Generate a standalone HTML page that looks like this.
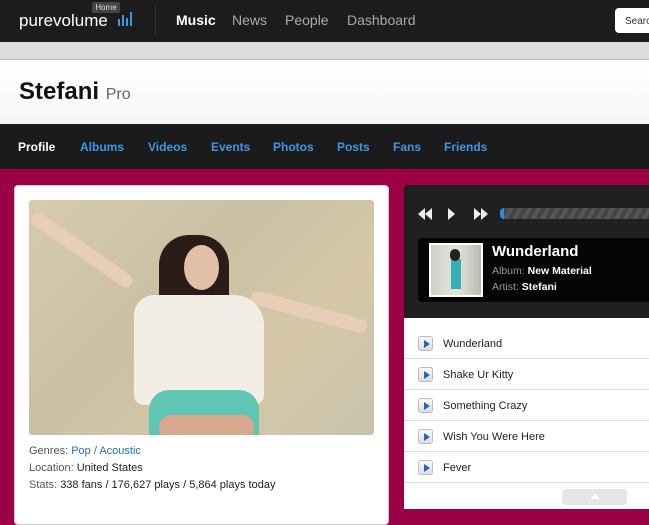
<!DOCTYPE html>
<html><head><style>
*{margin:0;padding:0;box-sizing:border-box}
body{width:649px;height:509px;overflow:hidden;background:#9c0046;font-family:"Liberation Sans","DejaVu Sans",sans-serif;position:relative}
.abs{position:absolute}
#top{left:0;top:0;width:649px;height:42px;background:#1c1c1c}
#top .m{position:absolute;top:12px;font-size:14px;color:#aaa}
#gray{left:0;top:42px;width:649px;height:18px;background:#dcdcdc;border-bottom:1px solid #bbb}
#hdr{left:0;top:60px;width:649px;height:64px;background:linear-gradient(#fff,#f6f6f6)}
#nav{left:0;top:124px;width:649px;height:45px;background:#1b1b1b}
#nav span{position:absolute;top:16px;font-size:12px;font-weight:bold;color:#3d97e8}
#card{left:14px;top:185px;width:375px;height:340px;background:#fff;border:1px solid #ccc;border-radius:4px}
#photo{left:29px;top:200px;width:345px;height:235px;overflow:hidden;background:
linear-gradient(135deg,#d9cbac,#c9c0a4 40%,#d6c8a6 70%,#c8c2ad);border-radius:3px}
#photo div{position:absolute}
.info{position:absolute;left:29px;font-size:11px;color:#555}
.info b{font-weight:normal;color:#222}.info a{color:#2a6ec0;text-decoration:none}
#player{left:404px;top:185px;width:245px;height:133px;background:#202020;border-radius:4px 0 0 0}
#now{left:418px;top:238px;width:231px;height:64px;background:#050505;border-radius:4px 0 0 4px}
#list{left:404px;top:318px;width:245px;height:191px;background:#fff}
.tr{position:absolute;left:404px;width:245px;height:31px;border-bottom:1px solid #ddd;font-size:11px;color:#222}
.tr i{position:absolute;left:14px;top:8px;width:15px;height:15px;border:1px solid #bbb;border-radius:3px;background:linear-gradient(#fafafa,#ddd)}
.tr i:after{content:"";position:absolute;left:5px;top:3px;border-left:6px solid #1a6bc0;border-top:4px solid transparent;border-bottom:4px solid transparent}
.tr span{position:absolute;left:39px;top:10px}
</style></head><body>
<div id="top" class="abs">
<div class="abs" style="left:19px;top:11px;font-size:17px;color:#fff">purevolume</div>
<div class="abs" style="left:92px;top:2px;width:28px;height:11px;background:#444;color:#ddd;font-size:8px;text-align:center;line-height:11px;border-radius:2px">Home</div>
<svg class="abs" style="left:117px;top:9px" width="20" height="18"><g fill="#3d97e8"><rect x="1" y="10" width="2" height="7"/><rect x="5" y="6" width="2" height="11"/><rect x="9" y="9" width="2" height="8"/><rect x="13" y="3" width="2" height="14"/></g></svg>
<div class="abs" style="left:155px;top:6px;width:1px;height:30px;background:#333"></div>
<span class="m" style="left:176px;color:#fff;font-weight:bold">Music</span>
<span class="m" style="left:232px">News</span>
<span class="m" style="left:285px">People</span>
<span class="m" style="left:347px">Dashboard</span>
<div class="abs" style="left:615px;top:8px;width:40px;height:25px;background:#fff;border-radius:4px;font-size:10px;color:#333;padding:8px 0 0 10px">Search</div>
</div>
<div id="gray" class="abs"></div>
<div id="hdr" class="abs"><div class="abs" style="left:19px;top:18px;font-size:24px;font-weight:bold;color:#111">Stefani <span style="font-size:16px;font-weight:normal;color:#666">Pro</span></div></div>
<div id="nav" class="abs">
<span style="left:18px;color:#fff">Profile</span><span style="left:80px">Albums</span><span style="left:148px">Videos</span><span style="left:211px">Events</span><span style="left:273px">Photos</span><span style="left:337px">Posts</span><span style="left:393px">Fans</span><span style="left:444px">Friends</span>
</div>
<div id="card" class="abs"></div>
<div id="photo" class="abs">
<div style="left:8px;top:10px;width:120px;height:14px;background:#e8cdb8;transform:rotate(35deg);transform-origin:0 0;border-radius:7px"></div>
<div style="left:220px;top:105px;width:120px;height:14px;background:#e8cdb8;transform:rotate(15deg);border-radius:7px"></div>
<div style="left:130px;top:35px;width:70px;height:160px;background:#2a1c18;border-radius:30px"></div>
<div style="left:105px;top:95px;width:130px;height:110px;background:#f2ede6;border-radius:20px 30px 10px 10px"></div>
<div style="left:155px;top:45px;width:35px;height:45px;background:#e2c0a8;border-radius:50%"></div>
<div style="left:120px;top:190px;width:110px;height:45px;background:#5ec6b2;border-radius:20px 20px 0 0"></div>
<div style="left:130px;top:215px;width:95px;height:25px;background:#d8a88e;border-radius:12px"></div>
</div>
<div class="info" style="top:445px">Genres: <a>Pop</a> / <a>Acoustic</a></div>
<div class="info" style="top:462px">Location: <b>United States</b></div>
<div class="info" style="top:479px">Stats: <b>338 fans / 176,627 plays / 5,864 plays today</b></div>
<div id="player" class="abs"></div>
<svg class="abs" style="left:417px;top:207px" width="75" height="14"><g fill="#eee"><path d="M8 1 1 7 8 13ZM15 1 8 7 15 13Z"/><path d="M31 1 38 7 31 13Z"/><path d="M57 1 64 7 57 13ZM64 1 71 7 64 13Z"/></g></svg>
<div class="abs" style="left:500px;top:208px;width:149px;height:11px;border-radius:6px 0 0 6px;background:repeating-linear-gradient(120deg,#555 0 4px,#444 4px 8px)"></div>
<div class="abs" style="left:500px;top:208px;width:4px;height:11px;border-radius:6px 0 0 6px;background:#2a8ae0"></div>
<div id="now" class="abs"></div>
<div class="abs" style="left:429px;top:243px;width:54px;height:54px;border:2px solid #fff;background:linear-gradient(90deg,#cfcfc8,#e4e2dc,#bcbcb4)"><div style="position:absolute;left:20px;top:14px;width:10px;height:30px;background:#35b0b5"></div><div style="position:absolute;left:19px;top:4px;width:10px;height:12px;background:#222;border-radius:5px"></div></div>
<div class="abs" style="left:492px;top:243px;font-size:15px;font-weight:bold;color:#fff">Wunderland</div>
<div class="abs" style="left:492px;top:265px;font-size:10.5px;color:#999">Album: <b style="color:#fff">New Material</b></div>
<div class="abs" style="left:492px;top:281px;font-size:10.5px;color:#999">Artist: <b style="color:#fff">Stefani</b></div>
<div id="list" class="abs"></div>
<div class="tr" style="top:328px"><i></i><span>Wunderland</span></div>
<div class="tr" style="top:359px"><i></i><span>Shake Ur Kitty</span></div>
<div class="tr" style="top:390px"><i></i><span>Something Crazy</span></div>
<div class="tr" style="top:421px"><i></i><span>Wish You Were Here</span></div>
<div class="tr" style="top:452px"><i></i><span>Fever</span></div>
<div class="abs" style="left:562px;top:489px;width:65px;height:16px;background:#e6e6e6;border-radius:4px"><div style="position:absolute;left:28px;top:5px;border-bottom:5px solid #fff;border-left:5px solid transparent;border-right:5px solid transparent"></div></div>
</body></html>
